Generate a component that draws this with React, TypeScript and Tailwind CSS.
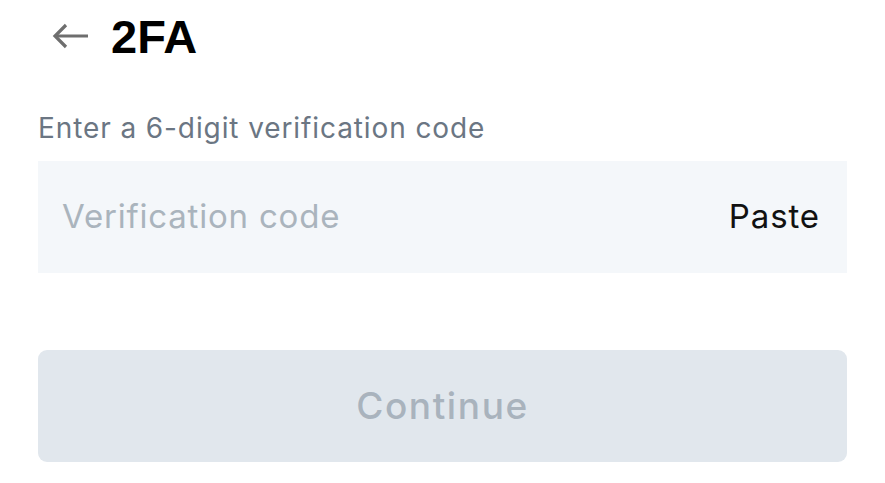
export default function App() {
  return (
    <div className="w-[885px] h-[483px] bg-white overflow-hidden" style={{ fontFamily: 'Inter, "Noto Sans", sans-serif' }}>
      <div className="flex items-center h-[72px] pl-[52px]">
        <svg width="38" height="26" viewBox="0 0 38 26" fill="none" stroke="#6e6e6e" strokeWidth="3.2" strokeLinecap="butt">
          <path d="M36 13H3" />
          <path d="M14 2L3 13l11 11" />
        </svg>
        <span className="ml-[21px] text-[47px] leading-none font-bold text-black" style={{ fontFamily: '"Liberation Sans", Arial, sans-serif' }}>2FA</span>
      </div>
      <div className="px-[38px]">
        <div className="mt-[40px] text-[28px] leading-[32px] tracking-[0.9px] text-[#6b7683]">Enter a 6-digit verification code</div>
        <div className="mt-[17px] h-[112px] bg-[#f4f7fa] flex items-center justify-between pl-[24px] pr-[27px]">
          <span className="text-[33px] tracking-[0.8px] text-[#aab4bd]">Verification code</span>
          <span className="text-[33px] tracking-[0.9px] text-[#111111]">Paste</span>
        </div>
        <div className="mt-[77px] h-[112px] bg-[#e1e7ed] rounded-[9px] flex items-center justify-center">
          <span className="text-[37px] font-medium tracking-[1.6px] text-[#a9b3bd]">Continue</span>
        </div>
      </div>
    </div>
  );
}
